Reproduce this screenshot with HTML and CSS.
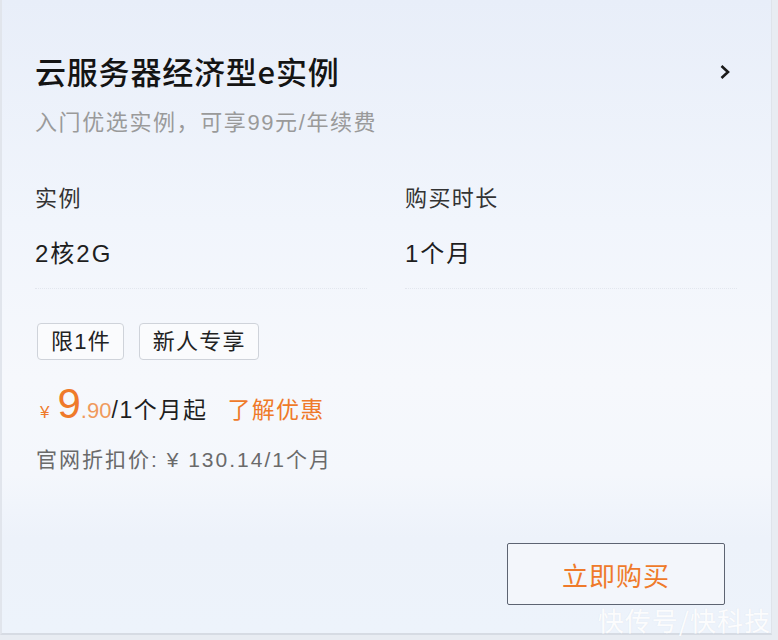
FILE: index.html
```html
<!DOCTYPE html>
<html lang="zh-CN">
<head>
<meta charset="utf-8">
<title>云服务器经济型e实例</title>
<link rel="stylesheet" href="styles.css">
</head>
<body>
<div class="card">
  <div class="head">
    <h1 class="title">云服务器经济型e实例</h1>
    <svg class="chev" width="12" height="16" viewBox="0 0 12 16"><path d="M2.5 2 L9 8 L2.5 14" fill="none" stroke="#1a1a1a" stroke-width="2.6" stroke-linejoin="miter"/></svg>
  </div>
  <p class="sub">入门优选实例，可享99元/年续费</p>
  <div class="specs">
    <div class="spec">
      <div class="label">实例</div>
      <div class="value">2核2G</div>
      <div class="rule"></div>
    </div>
    <div class="spec">
      <div class="label">购买时长</div>
      <div class="value">1个月</div>
      <div class="rule"></div>
    </div>
  </div>
  <div class="tags">
    <span class="tag">限1件</span>
    <span class="tag">新人专享</span>
  </div>
  <div class="price"><span class="yen">¥</span><span class="big">9</span><span class="dec">.90</span><span class="unit">/1个月起</span><span class="promo">了解优惠</span></div>
  <div class="orig">官网折扣价: ¥ 130.14/1个月</div>
  <div class="foot">
    <button class="buy">立即购买</button>
  </div>
  <div class="mark">快传号/快科技</div>
</div>
</body>
</html>
```

FILE: styles.css
```css
* { box-sizing: border-box; }
html, body { margin: 0; padding: 0; }
body {
  width: 778px;
  height: 640px;
  background: #e8ecf2;
  font-family: "Liberation Sans", "Noto Sans CJK SC", sans-serif;
  overflow: hidden;
}
.card {
  position: relative;
  width: 772px;
  height: 635px;
  border-left: 2px solid #e1e5ec;
  border-right: 1px solid #dfe3ea;
  border-bottom: 2px solid #d6dbe3;
  background: linear-gradient(180deg, #e8eef9 0%, #f1f5fc 35%, #f6f8fc 60%, #f4f7fc 75%, #edf2fa 85%, #edf3fb 100%);
  padding: 48px 0 0 33px;
}
.head {
  display: flex;
  align-items: center;
  justify-content: space-between;
  padding-right: 40px;
}
.title {
  margin: 0;
  font-family: "Noto Sans CJK SC", sans-serif;
  font-size: 31px;
  font-weight: 500;
  line-height: 46px;
  color: #141414;
  letter-spacing: 0.8px;
}
.chev { display: block; margin-top: 2px; }
.sub {
  margin: 14px 0 0;
  font-size: 22px;
  line-height: 30px;
  color: #9a9a9a;
  letter-spacing: 1.6px;
}
.specs {
  display: grid;
  grid-template-columns: 370px 335px;
  margin-top: 46px;
}
.label {
  font-size: 22px;
  line-height: 30px;
  color: #333;
  letter-spacing: 1.4px;
}
.value {
  margin-top: 25px;
  font-size: 24px;
  line-height: 30px;
  color: #1e1e1e;
  letter-spacing: 2px;
}
.rule {
  margin-top: 19px;
  width: 332px;
  height: 1px;
  border-top: 1px dotted #e2e6ee;
}
.tags {
  display: flex;
  gap: 15px;
  margin-top: 34px;
  padding-left: 2px;
}
.tag {
  display: inline-block;
  height: 37px;
  padding: 0 12px 0 13px;
  border: 1px solid #cfd3da;
  border-radius: 4px;
  background: #fafbfd;
  font-size: 22px;
  line-height: 35px;
  color: #222;
  letter-spacing: 1.2px;
}
.price {
  margin-top: 20px;
  padding-left: 5px;
  height: 48px;
  font-size: 40px;
  line-height: 48px;
  color: #ef7a2a;
  white-space: nowrap;
}
.price span { line-height: 1; }
.yen { font-size: 17px; margin-right: 8px; }
.big { font-size: 42px; }
.dec { font-size: 22px; color: #f09a5c; }
.unit { font-size: 23px; color: #1e1e1e; letter-spacing: 1.6px; }
.promo { font-size: 23px; color: #ef7a2a; margin-left: 20px; letter-spacing: 1.2px; }
.orig {
  margin-top: 18px;
  padding-left: 1px;
  font-size: 21px;
  line-height: 28px;
  color: #6a6a6a;
  letter-spacing: 2px;
}
.foot {
  display: flex;
  justify-content: flex-end;
  padding-right: 46px;
  margin-top: 69px;
}
.buy {
  width: 218px;
  height: 62px;
  border: 1.5px solid #5d6472;
  border-radius: 2px;
  background: #f3f6fb;
  font-family: "Noto Sans CJK SC", sans-serif;
  font-size: 26px;
  color: #ef7a2a;
  letter-spacing: 1px;
}
.mark {
  position: absolute;
  right: 0;
  bottom: -4px;
  font-family: "Noto Sans CJK SC", sans-serif;
  font-size: 26px;
  line-height: 34px;
  color: rgba(255,255,255,0.92);
  letter-spacing: 1px;
  text-shadow: 0 0 1px rgba(200,205,215,0.4);
}
```
